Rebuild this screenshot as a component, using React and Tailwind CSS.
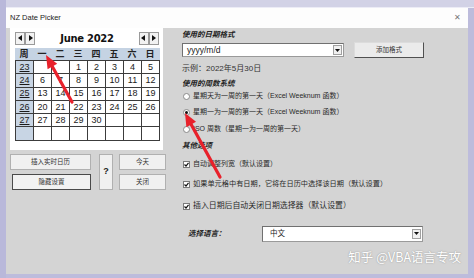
import React from "react";

const F = "font-['Liberation_Sans','Noto_Sans_CJK_SC',sans-serif]";

function NavBtn({ dir }) {
  return (
    <div className="w-[10px] h-[13px] bg-[#f2f2f2] border border-[#9a9a9a] flex items-center justify-center">
      <svg width="5" height="6" viewBox="0 0 5 6">
        {dir === "l" ? <polygon points="4,0 4,6 0,3" fill="#111" /> : <polygon points="1,0 1,6 5,3" fill="#111" />}
      </svg>
    </div>
  );
}

const rows = [
  ["23", "", "", "1", "2", "3", "4", "5"],
  ["24", "6", "7", "8", "9", "10", "11", "12"],
  ["25", "13", "14", "15", "16", "17", "18", "19"],
  ["26", "20", "21", "22", "23", "24", "25", "26"],
  ["27", "27", "28", "29", "30", "", "", ""],
  ["", "", "", "", "", "", "", ""],
];

function Radio({ on }) {
  return (
    <div className="w-[7px] h-[7px] rounded-full bg-white border border-[#8a8a8a] flex items-center justify-center shrink-0">
      {on && <div className="w-[3px] h-[3px] rounded-full bg-[#111]" />}
    </div>
  );
}

function Check() {
  return (
    <div className="w-[7px] h-[7px] bg-white border border-[#7a7a7a] flex items-center justify-center shrink-0">
      <svg width="5" height="5" viewBox="0 0 5 5">
        <polyline points="0.5,2.5 2,4 4.5,0.8" fill="none" stroke="#111" strokeWidth="1.2" />
      </svg>
    </div>
  );
}

function DropBtn() {
  return (
    <div className="w-[9px] h-[10px] bg-[#f0f0f0] border border-[#a0a0a0] flex items-center justify-center">
      <svg width="5" height="3" viewBox="0 0 5 3">
        <polygon points="0,0 5,0 2.5,3" fill="#111" />
      </svg>
    </div>
  );
}

export default function App() {
  return (
    <div className={`relative w-[474px] h-[278px] overflow-hidden bg-[#bdbcdc] ${F}`}>
      <div className="h-[8px] bg-[#d2d2e6] border-b border-[#ececf6]" />
      <div className="absolute left-0 top-0 w-[6px] h-full bg-[#b9b8da]" />
      <div className="pl-[6px] pr-[6px] h-[266px] flex flex-col">
        {/* title bar */}
        <div className="h-[20px] bg-[#fdfdfd] flex items-center justify-between pl-[4px] pr-[7px]">
          <span className="text-[7.5px] text-[#222]">NZ Date Picker</span>
          <span className="text-[8px] text-[#777] leading-none">✕</span>
        </div>
        {/* body */}
        <div className="flex-1 bg-[#d4d4d4] flex">
          {/* left column */}
          <div className="w-[174px] pl-[4px] flex flex-col">
            <div className="w-[153px] h-[122px] bg-white pl-[5px] pt-[3px]">
              <div className="w-[144px] h-[14px] flex items-center justify-between">
                <div className="flex"><NavBtn dir="l" /><NavBtn dir="r" /></div>
                <span className="text-[10px] font-bold text-[#111] font-['DejaVu_Sans',sans-serif] tracking-[-0.3px]">June 2022</span>
                <div className="flex"><NavBtn dir="l" /><NavBtn dir="r" /></div>
              </div>
              <div className="mt-[3px] w-[145px] h-[12px] bg-[#c5d3e3] flex">
                {["周", "一", "二", "三", "四", "五", "六", "日"].map((d) => (
                  <div key={d} className="w-[18px] flex items-center justify-center text-[9px] font-bold text-[#222] leading-none">{d}</div>
                ))}
              </div>
              <div className="w-[145px] grid grid-cols-[repeat(8,17px)] auto-rows-[12.3px] gap-px bg-[#3c3c3c] p-px">
                {rows.map((r, i) =>
                  r.map((c, j) => (
                    <div
                      key={i + "-" + j}
                      className={`flex items-center justify-center text-[9px] leading-none text-[#1a1a1a] ${j === 0 ? "bg-[#c8d5e4] underline" : "bg-white"}`}
                    >
                      {c}
                    </div>
                  ))
                )}
              </div>
            </div>
            {/* buttons */}
            <div className="mt-[4px] flex h-[36px]">
              <div className="w-[81px] flex flex-col gap-[4px]">
                <div className="h-[16px] bg-[#f0f0f0] border border-[#b0b0b0] flex items-center justify-center text-[6.5px] text-[#333]">插入实时日历</div>
                <div className="h-[16px] ml-[2px] bg-[#f2f2f2] border border-[#4a4a4a] flex items-center justify-center text-[6.5px] text-[#333]">隐藏设置</div>
              </div>
              <div className="ml-[8px] w-[14px] bg-[#f0f0f0] border border-[#b0b0b0] flex items-center justify-center text-[9px] font-bold text-[#222]">?</div>
              <div className="ml-[6px] w-[47px] flex flex-col gap-[4px]">
                <div className="h-[16px] bg-[#f0f0f0] border border-[#b0b0b0] flex items-center justify-center text-[6.5px] text-[#333]">今天</div>
                <div className="h-[16px] bg-[#f0f0f0] border border-[#b0b0b0] flex items-center justify-center text-[6.5px] text-[#333]">关闭</div>
              </div>
            </div>
          </div>
          {/* right column */}
          <div className="flex-1 flex flex-col pl-[2px] text-[#2a2a2a]">
            <div className="h-[13px] flex items-center text-[7.5px] font-bold italic text-[#222]">使用的日期格式</div>
            <div className="h-[17px] flex items-start">
              <div className="mt-[2px] w-[162px] h-[14px] bg-white border border-[#9a9a9a] border-t-[#707070] border-l-[#707070] flex items-center justify-between pl-[4px] pr-[1px]">
                <span className="text-[8.5px] text-[#222]">yyyy/m/d</span>
                <DropBtn />
              </div>
              <div className="ml-[10px] mt-[1px] w-[70px] h-[16px] bg-[#ebebeb] border border-[#dcdcdc] border-b-[#505050] border-r-[#505050] flex items-center justify-center text-[6.5px] text-[#333]">添加格式</div>
            </div>
            <div className="h-[21px] flex items-center text-[8px] text-[#333]">示例：2022年5月30日</div>
            <div className="h-[9px] flex items-center text-[7.5px] font-bold italic text-[#222]">使用的周数系统</div>
            <div className="h-[16px] flex items-center gap-[3px] pl-[1px] text-[7px]"><Radio />星期天为一周的第一天（Excel Weeknum 函数）</div>
            <div className="h-[16px] flex items-center gap-[3px] pl-[1px] text-[7px]"><Radio on />星期一为一周的第一天（Excel Weeknum 函数）</div>
            <div className="h-[18px] flex items-center gap-[3px] pl-[1px] text-[7px]"><Radio />ISO 周数（星期一为一周的第一天）</div>
            <div className="h-[16px] flex items-center text-[7.5px] font-bold italic text-[#222]">其他选项</div>
            <div className="h-[21px] flex items-center gap-[3px] pl-[1px] text-[7px]"><Check />自动调整列宽（默认设置）</div>
            <div className="h-[19px] flex items-center gap-[3px] pl-[1px] text-[7.2px]"><Check />如果单元格中有日期，它将在日历中选择该日期（默认设置）</div>
            <div className="h-[24px] flex items-center gap-[3px] pl-[1px] text-[7.9px]"><Check />插入日期后自动关闭日期选择器（默认设置）</div>
            <div className="h-[31px] flex items-center">
              <span className="w-[80px] pl-[6px] text-[7.5px] font-bold italic text-[#222]">选择语言：</span>
              <div className="w-[161px] h-[16px] bg-white border border-[#9a9a9a] border-t-[#707070] border-l-[#707070] flex items-center justify-between pl-[7px] pr-[1px]">
                <span className="text-[7.5px] text-[#222]">中文</span>
                <DropBtn />
              </div>
            </div>
            <div className="h-[16px] flex items-center justify-end pr-[7px]">
              <span className="text-[12.5px] text-white leading-none whitespace-nowrap [text-shadow:0_0_1px_#9a9a9a,0_0_2px_#b0b0b0] font-['Noto_Sans_CJK_SC',sans-serif]">知乎 @VBA语言专攻</span>
            </div>
          </div>
        </div>
      </div>
      <div className="h-[4px] bg-[#bdbcdc]" />
      {/* annotation arrows */}
      <svg className="absolute left-0 top-0 pointer-events-none" width="474" height="278" viewBox="0 0 474 278">
        <line x1="52.3" y1="66.4" x2="72" y2="102" stroke="#e8212b" strokeWidth="3.2" strokeLinecap="round" />
        <polygon points="46,55 57.2,63.8 47.6,69.2" fill="#e8212b" />
        <line x1="191.2" y1="124.4" x2="220" y2="177" stroke="#e8212b" strokeWidth="3.2" strokeLinecap="round" />
        <polygon points="185,113 196,121.8 186.4,127.2" fill="#e8212b" />
      </svg>
    </div>
  );
}
